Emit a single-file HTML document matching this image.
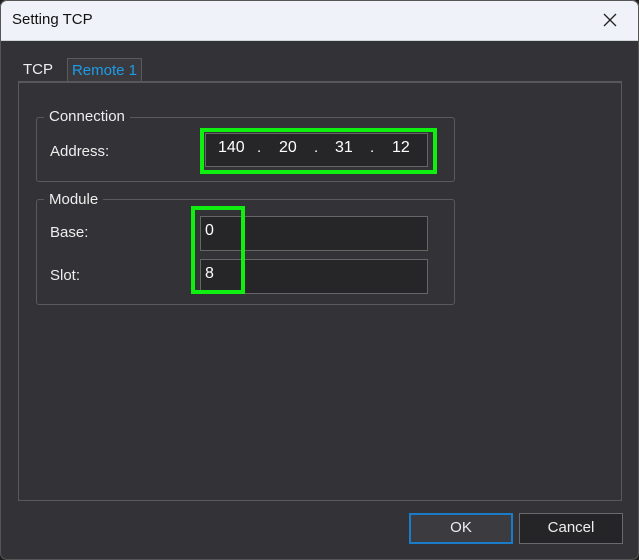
<!DOCTYPE html>
<html><head><style>
body{margin:0;width:639px;height:560px;background:#1e1e1e;font-family:"Liberation Sans",sans-serif;overflow:hidden;position:relative}
.win{position:absolute;left:0;top:0;width:639px;height:560px;background:#333337;border-radius:7px;overflow:hidden}
.frame{position:absolute;left:0;top:0;width:637px;height:558px;border:1px solid #555;border-radius:7px}
.title{position:absolute;left:0;top:0;right:0;height:40px;background:#eff2f8;color:#111;font-size:15px;border-bottom:1px solid #cfd3da}
.title span{position:absolute;left:12px;top:11px}
.abs{position:absolute}
.lbl{position:absolute;color:#eee;font-size:15px}
.fs{position:absolute;border:1px solid #5a5a5e;border-radius:3px}
.leg{position:absolute;background:#333337;color:#eee;font-size:15px;padding:0 5px}
.inp{position:absolute;background:#262628;border:1px solid #666;color:#fff;font-size:15px;box-sizing:border-box}
.g{position:absolute;border:4px solid #10f010;box-sizing:border-box}
.btn{position:absolute;box-sizing:border-box;color:#eee;font-size:15px;text-align:center;line-height:26px}
</style></head><body>
<div class="win">
<div class="title"><span>Setting TCP</span>
<svg class="abs" style="left:603px;top:13px" width="14" height="14"><path d="M1 1L13 13M13 1L1 13" stroke="#222" stroke-width="1.3"/></svg></div>
<div class="lbl" style="left:23px;top:61px">TCP</div>
<div class="abs" style="left:67px;top:58px;width:73px;height:23px;background:#3a3a3e;border:1px solid #5a5a5e;border-bottom:none;color:#1e9be8;font-size:15px;text-align:center;line-height:23px">Remote 1</div>
<div class="abs" style="left:18px;top:81px;width:602px;height:417px;border:1px solid #5a5a5e;border-top:2px solid #58585c"></div>
<div class="fs" style="left:36px;top:117px;width:417px;height:63px"></div>
<div class="leg" style="left:44px;top:108px">Connection</div>
<div class="lbl" style="left:50px;top:143px">Address:</div>
<div class="inp" style="left:205px;top:133px;width:223px;height:34px"></div>
<div class="lbl" style="left:218px;top:139px;color:#fff;font-size:16px">140</div>
<div class="lbl" style="left:257px;top:139px;color:#fff">.</div>
<div class="lbl" style="left:279px;top:139px;color:#fff;font-size:16px">20</div>
<div class="lbl" style="left:314px;top:139px;color:#fff">.</div>
<div class="lbl" style="left:335px;top:139px;color:#fff;font-size:16px">31</div>
<div class="lbl" style="left:370px;top:139px;color:#fff">.</div>
<div class="lbl" style="left:392px;top:139px;color:#fff;font-size:16px">12</div>
<div class="g" style="left:200px;top:128px;width:237px;height:46px"></div>
<div class="fs" style="left:36px;top:199px;width:417px;height:104px"></div>
<div class="leg" style="left:44px;top:191px">Module</div>
<div class="lbl" style="left:50px;top:224px">Base:</div>
<div class="lbl" style="left:50px;top:267px">Slot:</div>
<div class="inp" style="left:200px;top:216px;width:228px;height:35px;padding:5px 4px;font-size:16px">0</div>
<div class="inp" style="left:200px;top:259px;width:228px;height:35px;padding:5px 4px;font-size:16px">8</div>
<div class="g" style="left:191px;top:206px;width:54px;height:88px"></div>
<div class="btn" style="left:409px;top:513px;width:104px;height:31px;background:#3c3c40;border:2px solid #1a7cc8">OK</div>
<div class="btn" style="left:519px;top:513px;width:104px;height:31px;background:#252527;border:1px solid #6a6a6e;line-height:28px">Cancel</div>
</div>
<div class="frame"></div>
</body></html>
